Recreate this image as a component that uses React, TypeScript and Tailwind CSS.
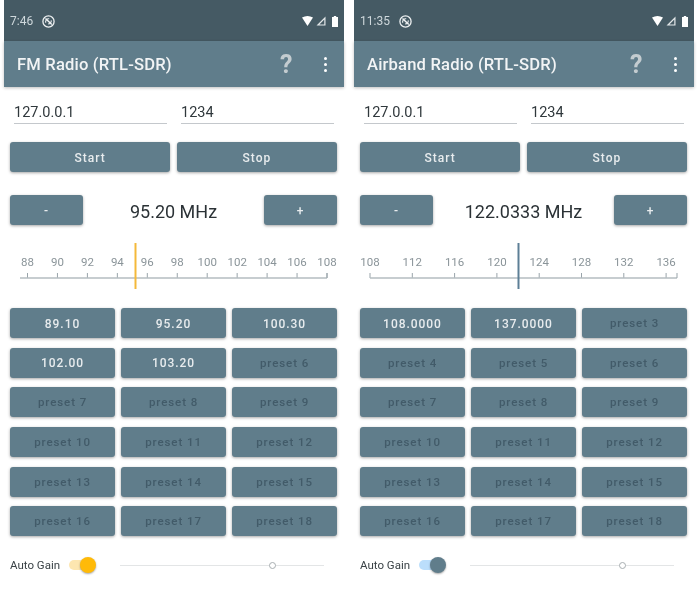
const btn = 'flex h-[30px] items-center justify-center rounded-[3px] bg-[#607d8b] pt-[1px] font-medium tracking-[0.08em] shadow-[0_1px_3px_rgba(0,0,0,0.35)]';

function StatusIcon() {
  return (
    <svg width="15" height="15" viewBox="0 0 15 15" fill="none" stroke="#eef1f2" strokeWidth="1.300">
      <circle cx="7.500" cy="7.500" r="5.600" />
      <path d="M4.500 4.500 10.800 10.500" strokeWidth="1.500" />
      <path d="M4.800 8.800a3 3 0 0 1 3.400-4" strokeWidth="1.100" />
      <path d="M10.200 6.300a3 3 0 0 1-3 3.600" strokeWidth="1.100" />
    </svg>
  );
}

function StatusBar({ time }: { time: string }) {
  return (
    <div className="flex h-[41px] items-center bg-[#455a64] pl-[6px] pr-[6px] pt-[1px]">
      <span className="text-[12px] text-[#cfd8dc]">{time}</span>
      <span className="ml-[8px]"><StatusIcon /></span>
      <div className="ml-auto flex items-center gap-[3px]">
        <svg width="11" height="10" viewBox="0 0 11 10"><path d="M0 1.500Q5.500-1.500 11 1.500L5.500 10Z" fill="#fff" /></svg>
        <svg width="10" height="10" viewBox="0 0 10 10"><path d="M9.500.5v9H.5ZM8.300 3.400 3.400 8.500h4.900Z" fill="#e4e8ea" fillRule="evenodd" /></svg>
        <svg width="6" height="11" viewBox="0 0 6 11" className="ml-[3px]"><path d="M1.800 0h2.400v1H6v10H0V1h1.800Z" fill="#fff" /></svg>
      </div>
    </div>
  );
}

function Toolbar({ title }: { title: string }) {
  return (
    <div className="relative flex h-[46px] items-center bg-[#607d8b] pl-[13px] pr-[17px] shadow-[0_1px_3px_rgba(0,0,0,0.25)]">
      <span className="pt-[2px] text-[16.600px] font-medium tracking-[0.01em] text-[#f2f4f5]">{title}</span>
      <span className="ml-auto mr-[31px] text-[25px] font-bold leading-none text-[#c3ccd0]">?</span>
      <div className="flex flex-col gap-[3px]">
        <span className="h-[3px] w-[3px] rounded-full bg-white" />
        <span className="h-[3px] w-[3px] rounded-full bg-white" />
        <span className="h-[3px] w-[3px] rounded-full bg-white" />
      </div>
    </div>
  );
}

function Field({ value }: { value: string }) {
  return (
    <div className="h-[26px] w-[153px] border-b border-[#c4c8cc] pt-[2px] text-[14.500px] leading-[26px] text-[#30383c]">{value}</div>
  );
}

function Ruler({ labels, first, step, end, marker, color }: { labels: number[]; first: number; step: number; end: number; marker: number; color: string }) {
  return (
    <svg width="340" height="50" className="mt-[17px] block">
      {labels.map((label, i) => (
        <g key={label}>
          <text x={first + step * i} y="24" textAnchor="middle" fontSize="11.5" fill="#8a9499" fontFamily="Roboto, sans-serif">{label}</text>
          <line x1={first + step * i} x2={first + step * i} y1="31" y2="36" stroke="#99a4aa" strokeWidth="1" />
        </g>
      ))}
      <line x1="16" x2={end} y1="36" y2="36" stroke="#b4bdc1" strokeWidth="1.400" />
      <line x1={end} x2={end} y1="31" y2="36" stroke="#99a4aa" strokeWidth="1" />
      <line x1={marker} x2={marker} y1="1" y2="47" stroke={color} strokeWidth="2" />
    </svg>
  );
}

type PhoneProps = {
  time: string;
  title: string;
  freq: string;
  labels: number[];
  first: number;
  step: number;
  marker: number;
  color: string;
  presets: string[];
  thumb: string;
  track: string;
};

function Phone({ time, title, freq, labels, first, step, marker, color, presets, thumb, track }: PhoneProps) {
  const cells = Array.from({ length: 18 }, (_, i) => presets[i] ?? `preset ${i + 1}`);
  return (
    <div className="w-[339.500px] shrink-0">
      <StatusBar time={time} />
      <Toolbar title={title} />

      <div className="mt-[11px] flex gap-[14px] pl-[10px]">
        <Field value="127.0.0.1" />
        <Field value="1234" />
      </div>

      <div className="mt-[18px] flex gap-[6.500px] pl-[6px] pr-[6.500px]">
        <div className={`${btn} flex-1 text-[12px] text-[#e8ecee]`}>Start</div>
        <div className={`${btn} flex-1 text-[12px] text-[#e8ecee]`}>Stop</div>
      </div>

      <div className="mt-[23px] flex items-center pl-[6px] pr-[6.500px]">
        <div className={`${btn} w-[73px] text-[12px] text-[#e8ecee]`}>-</div>
        <div className="flex-1 pt-[3px] text-center text-[18px] text-[#2b3236]">{freq}</div>
        <div className={`${btn} w-[73px] text-[12px] text-[#e8ecee]`}>+</div>
      </div>

      <Ruler labels={labels} first={first} step={step} end={323} marker={marker} color={color} />

      <div className="mt-[16px] grid grid-cols-3 gap-x-[6px] gap-y-[9.700px] pl-[6px] pr-[6.500px]">
        {cells.map((cell) => (
          <div key={cell} className={`${btn} ${cell.startsWith('preset') ? 'text-[11.500px] text-[#425b69]' : 'text-[12px] text-[#e8ecee]'}`}>{cell}</div>
        ))}
      </div>

      <div className="mt-[17px] flex h-[24px] items-center pl-[6px]">
        <span className="text-[11.500px] text-[#3a4246]">Auto Gain</span>
        <div className="relative ml-[9px] h-[10px] w-[22px] rounded-full" style={{ backgroundColor: track }}>
          <span className="absolute left-[11px] top-[-3px] h-[16px] w-[16px] rounded-full shadow-[0_1px_2px_rgba(0,0,0,0.35)]" style={{ backgroundColor: thumb }} />
        </div>
        <div className="relative ml-[29px] h-[1px] w-[204px] bg-[#e3e5e6]">
          <span className="absolute left-[149px] top-[-3px] h-[7px] w-[7px] rounded-full border border-[#a8aeb1] bg-white" />
        </div>
      </div>
    </div>
  );
}

export default function App() {
  return (
    <div className="flex h-[589px] w-[700px] gap-[10.500px] overflow-hidden bg-white pl-[4px] font-['Roboto',sans-serif] blur-[0.4px]">
      <Phone
        time="7:46"
        title="FM Radio (RTL-SDR)"
        freq="95.20 MHz"
        labels={[88, 90, 92, 94, 96, 98, 100, 102, 104, 106, 108]}
        first={23.5}
        step={29.95}
        marker={131.5}
        color="#f4b93a"
        presets={['89.10', '95.20', '100.30', '102.00', '103.20']}
        thumb="#ffba08"
        track="#fde6b0"
      />
      <Phone
        time="11:35"
        title="Airband Radio (RTL-SDR)"
        freq="122.0333 MHz"
        labels={[108, 112, 116, 120, 124, 128, 132, 136]}
        first={16}
        step={42.3}
        marker={164.5}
        color="#5d7f96"
        presets={['108.0000', '137.0000']}
        thumb="#607d8b"
        track="#bbdefb"
      />
    </div>
  );
}
